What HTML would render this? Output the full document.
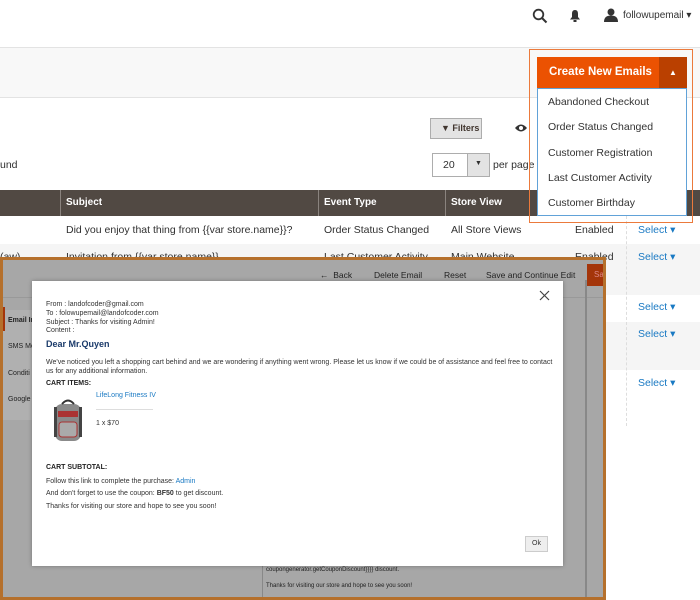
<!DOCTYPE html>
<html><head><style>
*{margin:0;padding:0;box-sizing:border-box}
body{width:700px;height:600px;overflow:hidden;position:relative;font-family:"Liberation Sans",sans-serif;background:#fff;color:#303030}
.a{position:absolute}
.t{font-size:10.5px;color:#303030}
.sel{color:#1979c3;font-size:10.5px}
</style></head><body>
<!-- header -->
<svg class="a" style="left:532px;top:8px" width="16" height="16" viewBox="0 0 16 16"><circle cx="6.5" cy="6.5" r="4.8" fill="none" stroke="#333" stroke-width="1.8"/><line x1="10" y1="10" x2="14.5" y2="14.5" stroke="#333" stroke-width="2"/></svg>
<svg class="a" style="left:569px;top:9px" width="12" height="14" viewBox="0 0 12 14"><path d="M6 1C3.5 1 3 3 3 5v3L1 10.5h10L9 8V5C9 3 8.5 1 6 1z" fill="#333"/><rect x="4.5" y="11" width="3" height="2" fill="#333"/></svg>
<svg class="a" style="left:604px;top:8px" width="14" height="14" viewBox="0 0 14 14"><circle cx="7" cy="4" r="3.5" fill="#333"/><path d="M0 14c0-5 3-6.5 7-6.5s7 1.5 7 6.5z" fill="#333"/></svg>
<div class="a" style="left:623px;top:10px;font-size:10px;color:#333">followupemail ▾</div>
<div class="a" style="left:0;top:47px;width:700px;height:51px;background:#f8f8f8;border-top:1px solid #e3e3e3;border-bottom:1px solid #e3e3e3"></div>
<!-- filters -->
<div class="a" style="left:430px;top:118px;width:52px;height:21px;background:#e3e3e3;border:1px solid #adadad;font-size:9px;font-weight:bold;color:#41362f;padding:4px 0 0 10px">▼ Filters</div>
<svg class="a" style="left:514px;top:123px" width="14" height="10" viewBox="0 0 14 10"><path d="M1 5Q7-2 13 5Q7 12 1 5z" fill="#333"/><circle cx="7" cy="5" r="2" fill="#fff"/></svg>
<div class="a t" style="left:0;top:159px">und</div>
<div class="a" style="left:432px;top:153px;width:58px;height:24px;border:1px solid #adadad;background:#fff;font-size:10.5px;padding:5px 0 0 10px">20</div>
<div class="a" style="left:467px;top:154px;width:22px;height:22px;background:#e3e3e3;border-left:1px solid #adadad;font-size:7px;text-align:center;padding-top:6px">▼</div>
<div class="a t" style="left:493px;top:159px">per page</div>
<!-- table -->
<div class="a" style="left:0;top:190px;width:700px;height:26px;background:#514943"></div>
<div class="a" style="left:60px;top:190px;width:1px;height:26px;background:#8a837e"></div>
<div class="a" style="left:318px;top:190px;width:1px;height:26px;background:#8a837e"></div>
<div class="a" style="left:445px;top:190px;width:1px;height:26px;background:#8a837e"></div>
<div class="a" style="left:66px;top:197px;color:#fff;font-size:10px;font-weight:bold">Subject</div>
<div class="a" style="left:324px;top:197px;color:#fff;font-size:10px;font-weight:bold">Event Type</div>
<div class="a" style="left:451px;top:197px;color:#fff;font-size:10px;font-weight:bold">Store View</div>
<div class="a t" style="left:66px;top:224px">Did you enjoy that thing from {{var store.name}}?</div>
<div class="a t" style="left:324px;top:224px">Order Status Changed</div>
<div class="a t" style="left:451px;top:224px">All Store Views</div>
<div class="a t" style="left:575px;top:224px">Enabled</div>
<div class="a sel" style="left:638px;top:224px">Select ▾</div>
<div class="a" style="left:0;top:244px;width:700px;height:51px;background:#f5f5f5"></div>
<div class="a" style="left:0;top:322px;width:700px;height:48px;background:#f5f5f5"></div>
<div class="a" style="left:626px;top:216px;width:0;height:210px;border-left:1px dashed #ddd"></div>
<div class="a t" style="left:0;top:251px">(aw)</div>
<div class="a t" style="left:66px;top:251px">Invitation from {{var store.name}}</div>
<div class="a t" style="left:324px;top:251px">Last Customer Activity</div>
<div class="a t" style="left:451px;top:251px">Main Website</div>
<div class="a t" style="left:575px;top:251px">Enabled</div>
<div class="a sel" style="left:638px;top:251px">Select ▾</div>
<div class="a sel" style="left:638px;top:301px">Select ▾</div>
<div class="a sel" style="left:638px;top:328px">Select ▾</div>
<div class="a sel" style="left:638px;top:377px">Select ▾</div>
<!-- dropdown -->
<div class="a" style="left:529px;top:49px;width:164px;height:174px;border:1.5px solid #eb7a3c"></div>
<div class="a" style="left:537px;top:57px;width:122px;height:31px;background:#eb5202;color:#fff;font-weight:bold;font-size:11.5px;padding:9px 0 0 12px">Create New Emails</div>
<div class="a" style="left:659px;top:57px;width:28px;height:31px;background:#ba4000;color:#fff;font-size:8px;text-align:center;padding-top:11px">▲</div>
<div class="a" style="left:537px;top:88px;width:150px;height:128px;background:#fff;border:1px solid #61a2d8;font-size:10.5px;color:#333;line-height:25.3px;padding:1px 0 0 10px">Abandoned Checkout<br>Order Status Changed<br>Customer Registration<br>Last Customer Activity<br>Customer Birthday</div>
<!-- overlay -->
<div class="a" style="left:0;top:257px;width:606px;height:343px;background:#a7a7a7;border:3px solid #b5702c"></div>
<div class="a" style="left:320px;top:270px;font-size:8.5px;color:#222">←&nbsp; Back</div>
<div class="a" style="left:374px;top:270px;font-size:8.5px;color:#222">Delete Email</div>
<div class="a" style="left:444px;top:270px;font-size:8.5px;color:#222">Reset</div>
<div class="a" style="left:486px;top:270px;font-size:8.5px;color:#222">Save and Continue Edit</div>
<div class="a" style="left:587px;top:264px;width:16px;height:22px;background:#a4350a;color:#d88;font-size:8px;padding:6px 0 0 7px;overflow:hidden">Sa</div>
<div class="a" style="left:3px;top:297px;width:600px;height:1px;background:#999"></div>
<div class="a" style="left:3px;top:310px;width:30px;height:110px;background:#b0b0b0"></div>
<div class="a" style="left:3px;top:307px;width:2px;height:24px;background:#a4350a"></div>
<div class="a" style="left:8px;top:317px;font-size:7px;color:#222;font-weight:bold">Email In</div>
<div class="a" style="left:8px;top:343px;font-size:7px;color:#222">SMS Me</div>
<div class="a" style="left:8px;top:370px;font-size:7px;color:#222">Conditi</div>
<div class="a" style="left:8px;top:396px;font-size:7px;color:#222">Google</div>
<div class="a" style="left:262px;top:565px;width:1px;height:32px;background:#888"></div>
<div class="a" style="left:585px;top:280px;width:2px;height:317px;background:#888"></div>
<div class="a" style="left:266px;top:566px;font-size:6px;color:#222;line-height:8px">coupongenerator.getCouponDiscount}}}} discount.<br><br>Thanks for visiting our store and hope to see you soon!</div>
<!-- modal -->
<div class="a" style="left:32px;top:281px;width:531px;height:285px;background:#fff;box-shadow:0 0 4px rgba(0,0,0,.3)"></div>
<svg class="a" style="left:539px;top:290px" width="11" height="11" viewBox="0 0 11 11"><path d="M1 1L10 10M10 1L1 10" stroke="#444" stroke-width="1.2"/></svg>
<div class="a" style="left:46px;top:301px;font-size:7px;color:#333;line-height:8.8px">From : landofcoder@gmail.com<br>To : folowupemail@landofcoder.com<br>Subject : Thanks for visiting Admin!<br>Content :</div>
<div class="a" style="left:46px;top:339px;font-size:9px;color:#1a3a6a;font-weight:bold">Dear Mr.Quyen</div>
<div class="a" style="left:46px;top:358px;width:510px;font-size:7px;color:#333;line-height:9px">We've noticed you left a shopping cart behind and we are wondering if anything went wrong. Please let us know if we could be of assistance and feel free to contact us for any additional information.</div>
<div class="a" style="left:46px;top:380px;font-size:7px;font-weight:bold;color:#222">CART ITEMS:</div>
<svg class="a" style="left:50px;top:397px" width="36" height="48" viewBox="0 0 36 48"><rect x="5" y="7" width="26" height="37" rx="7" fill="#8a8a8a"/><rect x="8" y="14" width="20" height="6" fill="#a33"/><rect x="9" y="25" width="18" height="15" rx="3" fill="#aaa" stroke="#a33"/><path d="M12 7Q18 0 24 7" stroke="#333" fill="none" stroke-width="2"/><rect x="4" y="10" width="3" height="30" fill="#444"/><rect x="29" y="10" width="3" height="30" fill="#444"/></svg>
<div class="a" style="left:96px;top:392px;font-size:7px;color:#1979c3">LifeLong Fitness IV</div>
<div class="a" style="left:96px;top:409px;width:57px;height:1px;background:#ddd"></div>
<div class="a" style="left:96px;top:420px;font-size:7px;color:#333">1 x $70</div>
<div class="a" style="left:46px;top:464px;font-size:7px;font-weight:bold;color:#222">CART SUBTOTAL:</div>
<div class="a" style="left:46px;top:476px;font-size:7px;color:#333;line-height:12.3px">Follow this link to complete the purchase: <span style="color:#1979c3">Admin</span><br>And don't forget to use the coupon: <b>BF50</b> to get discount.<br>Thanks for visiting our store and hope to see you soon!</div>
<div class="a" style="left:525px;top:536px;width:23px;height:16px;background:#eee;border:1px solid #ccc;font-size:7px;text-align:center;padding-top:3px">Ok</div>
</body></html>
